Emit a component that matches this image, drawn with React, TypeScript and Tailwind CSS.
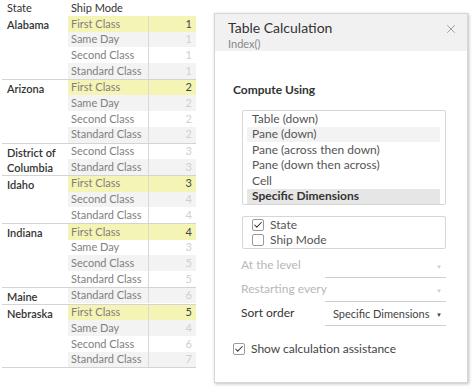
import { Check, X } from "lucide-react";

type Row = { mode: string; n: number };
type Group = { state: string[]; rows: Row[] };

const groups: Group[] = [
  { state: ["Alabama"], rows: [{ mode: "First Class", n: 1 }, { mode: "Same Day", n: 1 }, { mode: "Second Class", n: 1 }, { mode: "Standard Class", n: 1 }] },
  { state: ["Arizona"], rows: [{ mode: "First Class", n: 2 }, { mode: "Same Day", n: 2 }, { mode: "Second Class", n: 2 }, { mode: "Standard Class", n: 2 }] },
  { state: ["District of", "Columbia"], rows: [{ mode: "Second Class", n: 3 }, { mode: "Standard Class", n: 3 }] },
  { state: ["Idaho"], rows: [{ mode: "First Class", n: 3 }, { mode: "Second Class", n: 4 }, { mode: "Standard Class", n: 4 }] },
  { state: ["Indiana"], rows: [{ mode: "First Class", n: 4 }, { mode: "Same Day", n: 3 }, { mode: "Second Class", n: 5 }, { mode: "Standard Class", n: 5 }] },
  { state: ["Maine"], rows: [{ mode: "Standard Class", n: 6 }] },
  { state: ["Nebraska"], rows: [{ mode: "First Class", n: 5 }, { mode: "Same Day", n: 4 }, { mode: "Second Class", n: 6 }, { mode: "Standard Class", n: 7 }] },
];

const options = ["Table (down)", "Pane (down)", "Pane (across then down)", "Pane (down then across)", "Cell", "Specific Dimensions"];

const Box = ({ checked }: { checked: boolean }) => (
  <span className="w-[12px] h-[12px] border border-[#9a9a9a] rounded-[2px] bg-white flex items-center justify-center shrink-0">
    {checked && <Check size={10} strokeWidth={2.5} className="text-[#333]" />}
  </span>
);

const Table = () => {
  let idx = 0;
  return (
    <div className="w-[194px] ml-[2px] text-[11px]">
      <div className="flex h-[16px] items-center text-[#333]">
        <div className="w-[66px] pl-[5px]">State</div>
        <div className="pl-[3px]">Ship Mode</div>
      </div>
      {groups.map((g, gi) => (
        <div key={gi} className="flex border-b border-[#d4d4d4]">
          <div className="w-[66px] pl-[5px] pt-[1px] font-semibold text-[#333] leading-[15px]">
            {g.state.map((s) => (
              <div key={s}>{s}</div>
            ))}
          </div>
          <div className="flex-1 flex flex-col">
            {g.rows.map((r) => {
              const i = idx++;
              const first = r.mode === "First Class";
              const bg = first ? "bg-[#f4f4b4]" : i % 2 === 1 ? "bg-[#f3f3f3]" : "bg-white";
              return (
                <div key={r.mode} className={`flex h-[15.7px] items-center ${bg}`}>
                  <div className="w-[80px] pl-[3px] text-[#808080] whitespace-nowrap">{r.mode}</div>
                  <div className={`flex-1 h-full flex items-center justify-end pr-[4px] border-l border-[#d9d9d9] ${first ? "text-[#444]" : "text-[#d0d0d0]"}`}>
                    {r.n}
                  </div>
                </div>
              );
            })}
          </div>
        </div>
      ))}
    </div>
  );
};

const Dropdown = ({ label, value, disabled }: { label: string; value?: string; disabled?: boolean }) => (
  <div className="flex items-end h-[24px] whitespace-nowrap">
    <div className={`w-[84px] shrink-0 pb-[4px] ${disabled ? "text-[#b8b8b8]" : "text-[#333]"}`}>{label}</div>
    <div className="flex-1 min-w-0 flex items-center justify-between h-[22px] border-b border-[#cfcfcf] pl-[8px] pr-[4px]">
      <span className="text-[#444] text-[11px]">{value}</span>
      <span className={`text-[6px] ${disabled ? "text-[#cfcfcf]" : "text-[#444]"}`}>▼</span>
    </div>
  </div>
);

const Panel = () => (
  <div className="mt-[13px] ml-[18px] w-[254px] h-[370px] border border-[#d6d6d6] shadow-[1px_1px_3px_rgba(0,0,0,0.25)] bg-white flex flex-col text-[12px]">
    <div className="bg-[#f1f1f1] h-[37px] pl-[13px] pr-[9px] pt-[4px] flex justify-between">
      <div className="flex flex-col">
        <span className="text-[14px] leading-[19px] text-[#333]">Table Calculation</span>
        <span className="text-[11px] leading-[13px] text-[#888]">Index()</span>
      </div>
      <X size={14} strokeWidth={1.3} className="text-[#888] mt-[4px]" />
    </div>
    <div className="pl-[18px] pr-[21px] pt-[32px] flex flex-col">
      <div className="font-bold text-[#333] leading-[14px]">Compute Using</div>
      <div className="ml-[9px] mt-[13px] border border-[#d6d6d6] rounded-[2px] pl-[4px] pr-[5px] py-0 h-[95px] flex flex-col">
        {options.map((o, i) => (
          <div
            key={o}
            className={`h-[15.5px] flex items-center pl-[5px] whitespace-nowrap ${i === 1 ? "bg-[#f3f3f3]" : ""} ${i === 5 ? "bg-[#e6e6e6] font-bold text-[#333]" : "text-[#555]"}`}
          >
            {o}
          </div>
        ))}
      </div>
      <div className="ml-[9px] mt-[11px] border border-[#d6d6d6] rounded-[2px] h-[33px] pl-[9px] flex flex-col justify-center">
        <div className="flex items-center gap-[6px] h-[15px] text-[#555]">
          <Box checked />
          State
        </div>
        <div className="flex items-center gap-[6px] h-[15px] text-[#555]">
          <Box checked={false} />
          Ship Mode
        </div>
      </div>
      <div className="ml-[8px] mt-[5px] flex flex-col">
        <Dropdown label="At the level" disabled />
        <Dropdown label="Restarting every" disabled />
        <Dropdown label="Sort order" value="Specific Dimensions" />
      </div>
      <div className="mt-[14px] flex items-center gap-[6px] text-[#444] whitespace-nowrap">
        <Box checked />
        Show calculation assistance
      </div>
    </div>
  </div>
);

export default function App() {
  return (
    <div className="w-[474px] h-[388px] bg-white flex font-['Lato','Open_Sans',sans-serif]">
      <Table />
      <Panel />
    </div>
  );
}
